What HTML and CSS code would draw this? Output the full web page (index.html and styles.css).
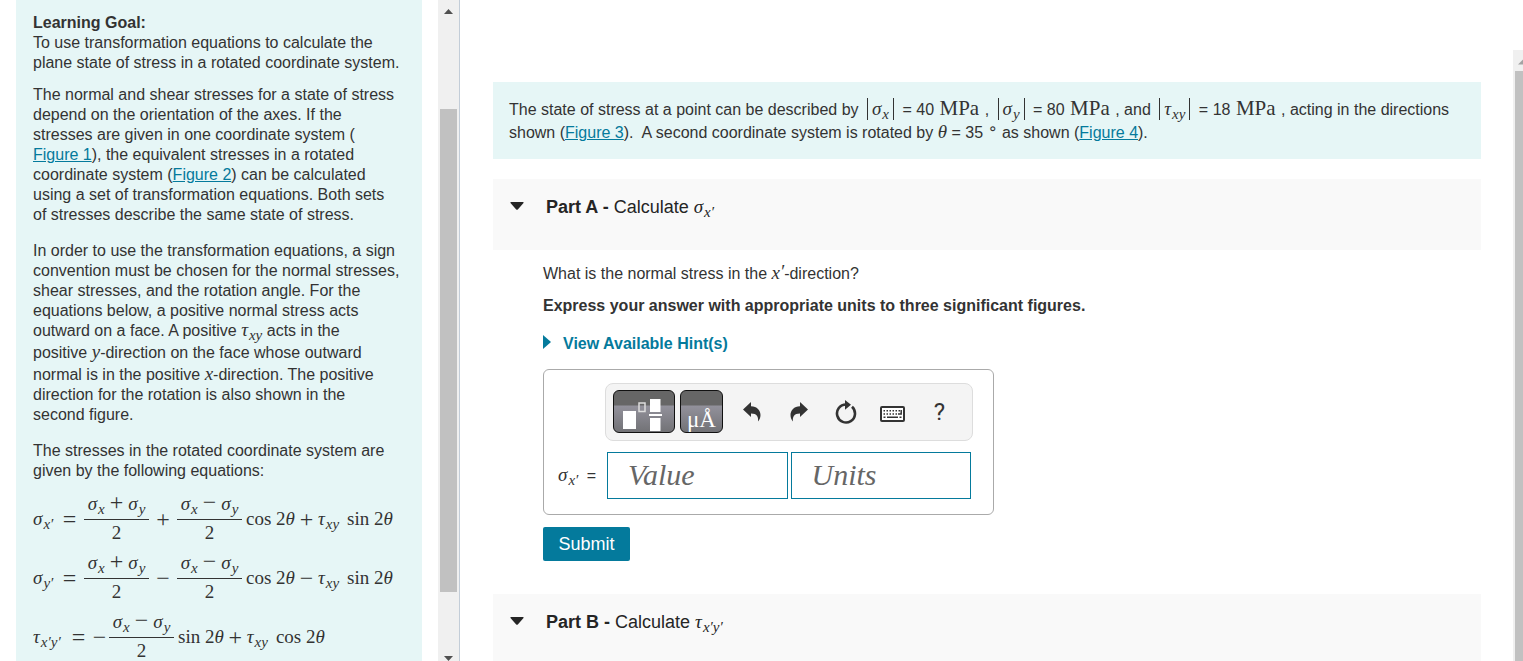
FILE: index.html
```html
<!DOCTYPE html>
<html lang="en">
<head>
    <meta charset="UTF-8">
    <meta name="viewport" content="width=device-width, initial-scale=1.0">
    <title>Stress Transformation</title>
    <link rel="stylesheet" href="styles.css">
</head>
<body>

    <aside class="sidebar">
        <div class="goal">
            <h2>Learning Goal:</h2>
            <p>To use transformation equations to calculate the plane state of stress in a rotated coordinate system.</p>
            <p>The normal and shear stresses for a state of stress depend on the orientation of the axes. If the stresses are given in one coordinate system (<br><a href="#figure1">Figure 1</a>), the equivalent stresses in a rotated coordinate system (<a href="#figure2">Figure 2</a>) can be calculated using a set of transformation equations. Both sets of stresses describe the same state of stress.</p>
            <p class="spaced">In order to use the transformation equations, a sign convention must be chosen for the normal stresses, shear stresses, and the rotation angle. For the equations below, a positive normal stress acts outward on a face. A positive <span class="math">τ<sub>xy</sub></span> acts in the<br><span class="tall">positive <span class="math">y</span>-direction on the face whose outward</span> normal is in the positive <span class="math">x</span>-direction. The positive direction for the rotation is also shown in the second figure.</p>
            <p class="spaced">The stresses in the rotated coordinate system are given by the following equations:</p>

            <div class="equations">
                <div class="equation">
                    <span class="math lhs">σ<sub>x′</sub></span>
                    <span class="op">=</span>
                    <span class="frac"><span class="math num">σ<sub>x</sub><b>+</b>σ<sub>y</sub></span><span class="den">2</span></span>
                    <span class="op mid">+</span>
                    <span class="frac"><span class="math num">σ<sub>x</sub><b>−</b>σ<sub>y</sub></span><span class="den">2</span></span>
                    <span class="term">cos 2<i>θ</i></span>
                    <span class="op">+</span>
                    <span class="math term">τ<sub>xy</sub></span>
                    <span class="term">sin 2<i>θ</i></span>
                </div>
                <div class="equation">
                    <span class="math lhs">σ<sub>y′</sub></span>
                    <span class="op">=</span>
                    <span class="frac"><span class="math num">σ<sub>x</sub><b>+</b>σ<sub>y</sub></span><span class="den">2</span></span>
                    <span class="op mid">−</span>
                    <span class="frac"><span class="math num">σ<sub>x</sub><b>−</b>σ<sub>y</sub></span><span class="den">2</span></span>
                    <span class="term">cos 2<i>θ</i></span>
                    <span class="op">−</span>
                    <span class="math term">τ<sub>xy</sub></span>
                    <span class="term">sin 2<i>θ</i></span>
                </div>
                <div class="equation">
                    <span class="math lhs wide">τ<sub>x′y′</sub></span>
                    <span class="op">=</span>
                    <span class="op sign">−</span>
                    <span class="frac"><span class="math num">σ<sub>x</sub><b>−</b>σ<sub>y</sub></span><span class="den">2</span></span>
                    <span class="term">sin 2<i>θ</i></span>
                    <span class="op">+</span>
                    <span class="math term">τ<sub>xy</sub></span>
                    <span class="term">cos 2<i>θ</i></span>
                </div>
            </div>
        </div>
        <div class="scrollbar">
            <svg width="9" height="5" viewBox="0 0 9 5"><path d="M0 5 4.500 0 9 5z" fill="#505050"/></svg>
            <div class="thumb"></div>
            <svg width="9" height="5" viewBox="0 0 9 5"><path d="M0 0h9L4.500 5z" fill="#505050"/></svg>
        </div>
    </aside>

    <main>
        <div class="intro">
            The state of stress at a point can be described by <span class="math abs">σ<sub>x</sub></span> = 40 <span class="unit">MPa</span> , <span class="math abs">σ<sub>y</sub></span> = 80 <span class="unit">MPa</span> , and <span class="math abs">τ<sub>xy</sub></span> = 18 <span class="unit">MPa</span> , acting in the directions<br>shown (<a href="#figure3">Figure 3</a>).&nbsp; A second coordinate system is rotated by <span class="math">θ</span> = 35 <span class="degree">∘</span> as shown (<a href="#figure4">Figure 4</a>).
        </div>

        <button class="part-header" type="button">
            <svg width="14" height="8" viewBox="0 0 14 8"><path d="M1 0h12q1 0 .5 1L8 7.200q-1 1-2 0L.5 1Q0 0 1 0z" fill="#252525"/></svg>
            <span><b>Part A -</b> Calculate <span class="math">σ<sub>x′</sub></span></span>
        </button>

        <section class="part-body">
            <p>What is the normal stress in the <span class="math">x<sup>′</sup></span>-direction?</p>
            <p><b>Express your answer with appropriate units to three significant figures.</b></p>
            <button class="hints" type="button">
                <svg width="8" height="14" viewBox="0 0 8 14"><path d="M0 0 8 7 0 14z" fill="#047a9c"/></svg>
                View Available Hint(s)
            </button>

            <div class="answer">
                <div class="toolbar">
                    <button class="dark templates" type="button" aria-label="Templates">
                        <svg width="40" height="34" viewBox="0 0 40 34">
                            <path d="M0 13h13v18H0zM27 1h10.500v13H27zM27 20h10.500v13H27zM26 16h13v2H26z" fill="#fff"/>
                            <path d="M16 5h6v8.500h-6z" fill="none" stroke="#ddd" stroke-width="1.500"/>
                        </svg>
                    </button>
                    <button class="dark symbols" type="button">μÅ</button>
                    <button class="tool" type="button" aria-label="Undo">
                        <svg width="18" height="20" viewBox="0 0 18 20"><path d="M0 7.500 8 0v4.300c6 .2 9.500 4 9.500 8.700 0 2.500-.8 4.700-2.500 6.500.6-4.500-1-8-7-8V15z" fill="#333"/></svg>
                    </button>
                    <button class="tool" type="button" aria-label="Redo">
                        <svg width="18" height="20" viewBox="0 0 18 20"><path d="M18 7.500 10 0v4.300C4 4.500.5 8.300.5 13c0 2.500.8 4.700 2.500 6.500-.6-4.500 1-8 7-8V15z" fill="#333"/></svg>
                    </button>
                    <button class="tool" type="button" aria-label="Reset">
                        <svg width="22" height="24" viewBox="0 0 22 24"><path d="M11 4.500A9 9 0 1 0 17 6.800" fill="none" stroke="#333" stroke-width="2.600"/><path d="M10 0l6 4.700-6 5z" fill="#333"/></svg>
                    </button>
                    <button class="tool" type="button" aria-label="Keyboard">
                        <svg class="keyboard" width="25" height="16" viewBox="0 0 25 16">
                            <rect x="1" y="1" width="23" height="14" rx="1" fill="#fff" stroke="#333" stroke-width="2"/>
                            <path d="M3.500 4.700h18" stroke="#333" stroke-width="1.500" stroke-dasharray="1.500 1.500"/>
                            <path d="M3.500 7.900h15" stroke="#333" stroke-width="1.500" stroke-dasharray="1.500 1.500"/>
                            <path d="M18 8h3.200V4" fill="none" stroke="#333" stroke-width="1.500"/>
                            <path d="M3.500 11.300h2M7 11.300h11M19.500 11.300h2" stroke="#333" stroke-width="1.500"/>
                        </svg>
                    </button>
                    <button class="tool help" type="button">?</button>
                </div>
                <div class="fields">
                    <label for="value"><span class="math">σ<sub>x′</sub></span> <span>=</span></label>
                    <input id="value" type="text" placeholder="Value">
                    <input id="units" type="text" placeholder="Units" aria-label="Units">
                </div>
            </div>
            <button class="submit" type="submit">Submit</button>
        </section>

        <button class="part-header" type="button">
            <svg width="14" height="8" viewBox="0 0 14 8"><path d="M1 0h12q1 0 .5 1L8 7.200q-1 1-2 0L.5 1Q0 0 1 0z" fill="#252525"/></svg>
            <span><b>Part B -</b> Calculate <span class="math">τ<sub>x′y′</sub></span></span>
        </button>
    </main>

    <div class="page-scroll">
        <svg width="10" height="6" viewBox="0 0 10 6"><path d="M0 5.500 5 .5l5 5z" fill="#a3a3a3"/></svg>
        <div class="thumb"></div>
    </div>

</body>
</html>
```
FILE: styles.css
```css
* {
    box-sizing: border-box;
}
body {
    margin: 0;
    height: 100vh;
    overflow: hidden;
    display: flex;
    background-color: #fff;
    color: #333;
    font: 16px/20px "Liberation Sans", Arial, sans-serif;
}
button {
    font-family: inherit;
    border: none;
    background: none;
    padding: 0;
    color: inherit;
    cursor: pointer;
}
svg {
    display: block;
    flex: none;
}
a {
    color: #047a9c;
}
p {
    margin: 0 0 12px;
}

/* math */
.math {
    font-family: "Liberation Serif", "Times New Roman", serif;
    font-style: italic;
    font-size: 19px;
    line-height: 1px;
    white-space: nowrap;
}
.math sub,
.math sup {
    font-size: 15px;
    line-height: 1px;
}
.math sub {
    vertical-align: -4px;
    margin-left: 1px;
}
.math sup {
    font-size: 19px;
    vertical-align: 1px;
}
.abs {
    margin: 0 4px;
    padding: 0 4px 1px;
    border-left: 1px solid #333;
    border-right: 1px solid #333;
}
.unit {
    margin: 0 1px;
    font-family: "Liberation Serif", "Times New Roman", serif;
    font-size: 21px;
    line-height: 1px;
}
.degree {
    font-family: "DejaVu Sans", sans-serif;
    line-height: 1px;
    vertical-align: 4px;
}

/* left column */
.sidebar {
    flex: none;
    display: flex;
    width: 460px;
    padding-left: 16px;
    border-right: 1px solid #c3cdd8;
    overflow: hidden;
}
.goal {
    flex: 1;
    padding: 13px 22px 0 17px;
    background-color: #e6f6f6;
}
.goal h2 {
    margin: 0;
    font-size: 16px;
    line-height: 20px;
}
.goal .spaced {
    margin: 16px 0;
}
.tall {
    display: inline-block;
    line-height: 24px;
}
.equations {
    margin-top: -8px;
}
.equation {
    display: flex;
    align-items: center;
    height: 59px;
    font-family: "Liberation Serif", "Times New Roman", serif;
    font-size: 19px;
    white-space: nowrap;
}
.equation .math {
    line-height: 20px;
}
.lhs {
    width: 29px;
}
.lhs.wide {
    width: 38px;
}
.op {
    width: 15px;
    text-align: center;
    font-size: 24px;
}
.mid {
    width: 28px;
}
.frac {
    display: flex;
    flex-direction: column;
    width: 65px;
    text-align: center;
}
.op + .frac {
    margin-left: 7px;
}
.mid + .frac,
.sign + .frac {
    margin-left: 0;
}
.sign {
    margin: 0 2px 0 6px;
}
.equation .num {
    height: 28px;
    line-height: 24px;
    border-bottom: 1px solid #333;
}
.num b {
    font-weight: normal;
    font-style: normal;
    font-size: 24px;
    line-height: 1px;
    margin: 0 5px;
}
.den {
    height: 26px;
    line-height: 26px;
}
.term {
    margin: 0 4px;
}

/* scrollbars */
.scrollbar {
    flex: none;
    display: flex;
    flex-direction: column;
    align-items: center;
    width: 21px;
    margin-left: 16px;
    padding-top: 9px;
    background-color: #f0f0f0;
}
.thumb {
    background-color: #c1c1c1;
}
.scrollbar .thumb {
    flex: none;
    width: 17px;
    height: 73vh;
    margin-top: 95px;
    margin-bottom: auto;
}
.page-scroll {
    flex: none;
    display: flex;
    flex-direction: column;
    width: 10px;
    margin-top: 50px;
    padding: 9px 0 0 2px;
    overflow: hidden;
    background-color: #f0f0f0;
}
.page-scroll svg {
    margin: 0 0 6px 3px;
}
.page-scroll .thumb {
    flex: 1;
}

/* right column */
main {
    flex: 1;
    padding: 82px 32px 0 33px;
    overflow: hidden;
}
.intro {
    padding: 16px 16px 15px;
    margin-bottom: 20px;
    line-height: 23px;
    background-color: #e6f6f6;
}
.part-header {
    display: flex;
    width: 100%;
    height: 71px;
    padding: 18px 17px;
    gap: 22px;
    background-color: #f9f9f9;
    color: #252525;
    font-size: 18px;
    line-height: 20px;
    text-align: left;
}
.part-header svg {
    margin-top: 5px;
}
.part-body {
    padding: 14px 50px 33px;
}
.hints {
    display: flex;
    align-items: center;
    gap: 12px;
    margin-top: 18px;
    color: #047a9c;
    font-size: 16px;
    font-weight: bold;
    line-height: 20px;
}
.hints svg {
    margin-bottom: 4px;
}
.answer {
    width: 451px;
    margin: 15px 0 12px;
    padding: 13px 20px 15px 14px;
    border: 1px solid #aaa;
    border-radius: 6px;
}
.toolbar {
    display: flex;
    align-items: center;
    height: 58px;
    margin-left: 47px;
    padding: 0 7px 2px;
    border: 1px solid #ddd;
    border-radius: 8px;
    background-color: #f4f4f4;
}
.dark {
    height: 43px;
    border: 1px solid #111;
    border-radius: 6px;
    background: linear-gradient(#666 0, #666 14px, #92919b 15px, #727276 100%);
    color: #fff;
}
.templates {
    width: 62px;
    padding: 7px 0 0 9px;
}
.symbols {
    width: 43px;
    margin: 0 5px;
    padding-top: 17px;
    font-family: "Liberation Serif", serif;
    font-size: 23px;
    line-height: 23px;
    overflow: hidden;
}
.tool {
    display: flex;
    justify-content: center;
    align-items: center;
    width: 47px;
    height: 42px;
    padding-top: 2px;
    color: #333;
}
.keyboard {
    margin-top: 4px;
}
.help {
    font-family: Roboto, sans-serif;
    font-size: 24px;
}
.fields {
    display: flex;
    align-items: center;
    gap: 3px;
    margin: 11px 2px 0 0;
}
.fields label {
    display: flex;
    justify-content: space-between;
    align-items: baseline;
    width: 46px;
    padding-right: 8px;
    line-height: 20px;
}
.fields input {
    flex: 1;
    min-width: 0;
    height: 47px;
    padding: 0 20px 2px;
    border: 1px solid #047a9c;
    font: italic 30px "Liberation Serif", serif;
    color: #333;
}
.fields input::placeholder {
    color: #666;
}
.submit {
    width: 87px;
    height: 34px;
    border-radius: 2px;
    background-color: #047a9c;
    color: #fff;
    font-size: 18px;
}
```
